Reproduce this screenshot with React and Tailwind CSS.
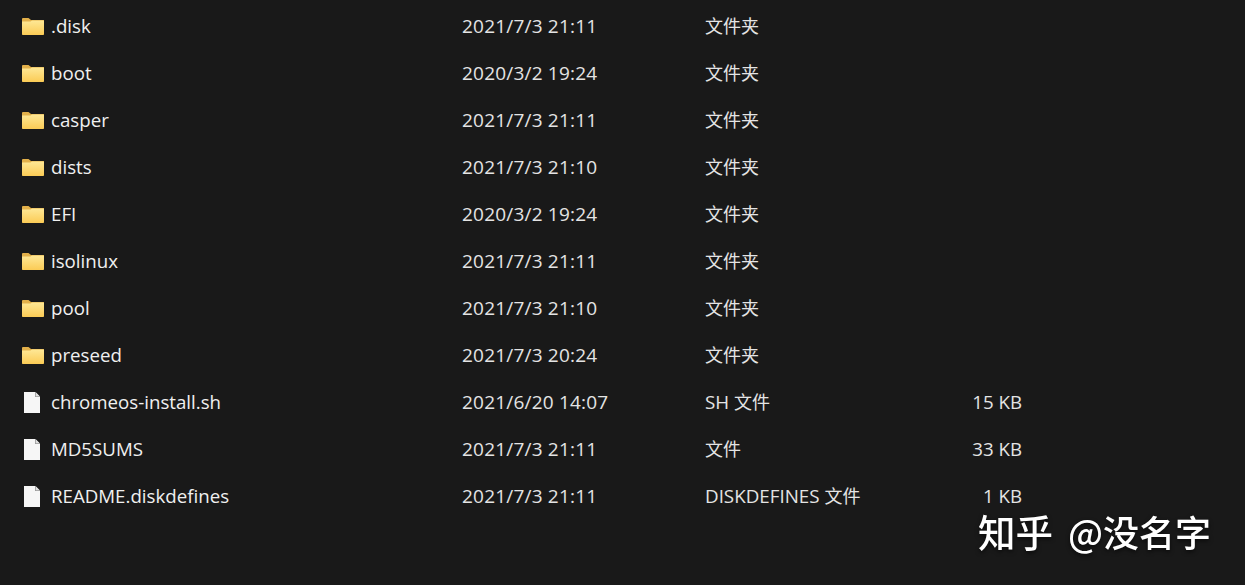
import React from 'react';

const rows = [
  { name: '.disk', date: '2021/7/3 21:11', type: '文件夹', folder: true },
  { name: 'boot', date: '2020/3/2 19:24', type: '文件夹', folder: true },
  { name: 'casper', date: '2021/7/3 21:11', type: '文件夹', folder: true },
  { name: 'dists', date: '2021/7/3 21:10', type: '文件夹', folder: true },
  { name: 'EFI', date: '2020/3/2 19:24', type: '文件夹', folder: true },
  { name: 'isolinux', date: '2021/7/3 21:11', type: '文件夹', folder: true },
  { name: 'pool', date: '2021/7/3 21:10', type: '文件夹', folder: true },
  { name: 'preseed', date: '2021/7/3 20:24', type: '文件夹', folder: true },
  { name: 'chromeos-install.sh', date: '2021/6/20 14:07', ext: 'SH ', type: '文件', size: '15 KB' },
  { name: 'MD5SUMS', date: '2021/7/3 21:11', type: '文件', size: '33 KB' },
  { name: 'README.diskdefines', date: '2021/7/3 21:11', ext: 'DISKDEFINES ', type: '文件', size: '1 KB' },
];

const FolderIcon = () => (
  <svg width="24" height="18" viewBox="0 0 24 18" className="block">
    <defs>
      <linearGradient id="folderFront" x1="0" y1="0" x2="0" y2="1">
        <stop offset="0" stopColor="#fee896" />
        <stop offset="1" stopColor="#fbcb55" />
      </linearGradient>
    </defs>
    <path d="M1 1.2C1 .5 1.5 0 2.2 0H7.5L10 2h13v3H1z" fill="#e2b04a" />
    <path d="M1 3.5h8.5L11 2.4h11.2c.5 0 .8.3.8.8V16c0 .6-.4 1-1 1H2c-.6 0-1-.4-1-1z" fill="url(#folderFront)" />
  </svg>
);

const FileIcon = () => (
  <svg width="24" height="24" viewBox="0 0 24 24" className="block">
    <path d="M3 1h11l5 5v16H3z" fill="#f6f6f6" />
    <path d="M14 1v5h5z" fill="#9a9a9a" />
    <path d="M14.8 1.2v4h4z" fill="#dedede" />
  </svg>
);

const App = () => {
  return (
    <div className="relative w-[1245px] h-[585px] overflow-hidden bg-[#191919] text-[#e4e4e4] text-[18.7px] pt-[3px] font-['Open_Sans','Noto_Sans_CJK_SC',sans-serif]">
      {rows.map((row) => (
        <div key={row.name} className="flex items-center h-[47px]">
          <div className="w-[51px] pl-[21px] flex items-center justify-start shrink-0">
            {row.folder ? <FolderIcon /> : <FileIcon />}
          </div>
          <div className="w-[411px] shrink-0 pb-[1px] text-[#f0f0f0]">{row.name}</div>
          <div className="w-[243px] shrink-0 text-[19px] tracking-[0.2px]">{row.date}</div>
          <div className="w-[220px] shrink-0 text-[18px] whitespace-pre">
            {row.ext && <span className="text-[18.8px]">{row.ext}</span>}
            {row.type}
          </div>
          <div className="w-[97px] shrink-0 pb-[1px] text-right">{row.size}</div>
        </div>
      ))}

      {/* Watermark */}
      <div className="absolute left-[978px] top-[511px] flex items-center gap-[15px] text-white leading-[40px] font-medium drop-shadow-[0_2px_2px_rgba(0,0,0,0.6)] font-['Noto_Sans_CJK_SC',sans-serif]">
        <span className="text-[37.5px]">知乎</span>
        <span className="text-[36px]">@没名字</span>
      </div>
    </div>
  );
};

export default App;
